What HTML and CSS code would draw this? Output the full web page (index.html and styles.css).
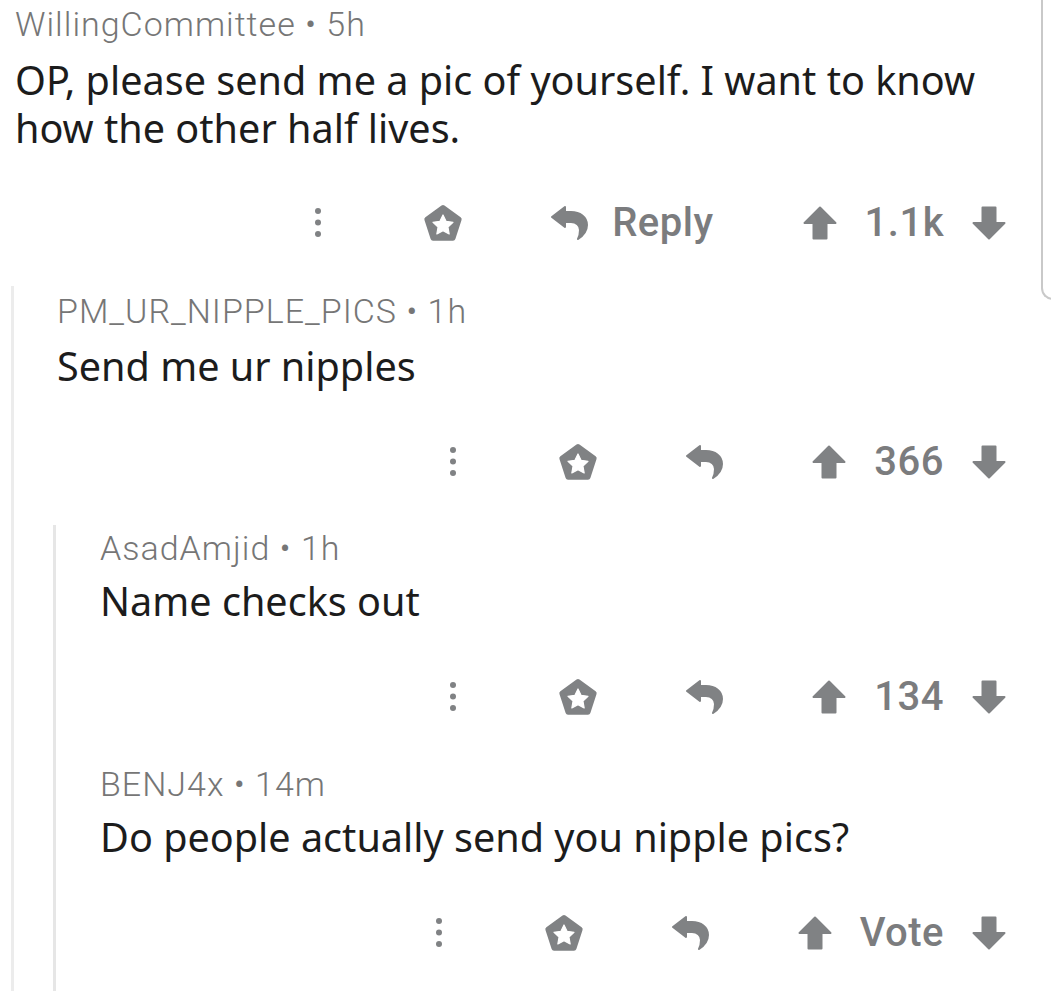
FILE: index.html
```html
<!DOCTYPE html>
<html>
<head>
<meta charset="utf-8">
<link rel="stylesheet" href="styles.css">
</head>
<body>
<div class="edge"></div>
<div class="thread">
  <div class="comment top">
    <div class="meta">WillingCommittee • 5h</div>
    <div class="body">OP, please send me a pic of yourself. I want to know how the other half lives.</div>
    <div class="actions">
      <svg class="dots" viewBox="0 0 6 30"><circle cx="3" cy="3" r="3"/><circle cx="3" cy="14.5" r="3"/><circle cx="3" cy="26" r="3"/></svg>
      <svg class="award" viewBox="0 0 38 37"><path class="pent" d="M19 2.5 L35.17 14.25 L28.99 33.25 L9.01 33.25 L2.83 14.25 Z"/><path class="star" d="M19 10 L22.06 16.29 L28.99 17.26 L23.95 22.11 L25.17 28.99 L19 25.7 L12.83 28.99 L14.05 22.11 L9.01 17.26 L15.94 16.29 Z"/></svg>
      <div class="reply"><svg class="reply-ic" viewBox="0 0 37 34"><path d="M14 1 L1 11 L14 21 L14 16 L20 16 C25 16 29 19 29 24 C29 28 28 31 27 33 C33 29 36 24 36 19 C36 11 29 6 20 6 L14 6 Z"/></svg><span class="label">Reply</span></div>
      <div class="vote"><svg class="arrow" viewBox="0 0 34 34"><path d="M17 1.5 L32.5 17 L23.5 17 L23.5 32.5 L10.5 32.5 L10.5 17 L1.5 17 Z"/></svg><span class="label">1.1k</span><svg class="arrow" viewBox="0 0 34 34"><path d="M17 32.5 L32.5 17 L23.5 17 L23.5 1.5 L10.5 1.5 L10.5 17 L1.5 17 Z"/></svg></div>
    </div>
  </div>
  <div class="replies d1">
    <div class="comment">
      <div class="meta">PM_UR_NIPPLE_PICS • 1h</div>
      <div class="body">Send me ur nipples</div>
      <div class="actions">
        <svg class="dots" viewBox="0 0 6 30"><circle cx="3" cy="3" r="3"/><circle cx="3" cy="14.5" r="3"/><circle cx="3" cy="26" r="3"/></svg>
        <svg class="award" viewBox="0 0 38 37"><path class="pent" d="M19 2.5 L35.17 14.25 L28.99 33.25 L9.01 33.25 L2.83 14.25 Z"/><path class="star" d="M19 10 L22.06 16.29 L28.99 17.26 L23.95 22.11 L25.17 28.99 L19 25.7 L12.83 28.99 L14.05 22.11 L9.01 17.26 L15.94 16.29 Z"/></svg>
        <div class="reply"><svg class="reply-ic" viewBox="0 0 37 34"><path d="M14 1 L1 11 L14 21 L14 16 L20 16 C25 16 29 19 29 24 C29 28 28 31 27 33 C33 29 36 24 36 19 C36 11 29 6 20 6 L14 6 Z"/></svg></div>
        <div class="vote"><svg class="arrow" viewBox="0 0 34 34"><path d="M17 1.5 L32.5 17 L23.5 17 L23.5 32.5 L10.5 32.5 L10.5 17 L1.5 17 Z"/></svg><span class="label">366</span><svg class="arrow" viewBox="0 0 34 34"><path d="M17 32.5 L32.5 17 L23.5 17 L23.5 1.5 L10.5 1.5 L10.5 17 L1.5 17 Z"/></svg></div>
      </div>
    </div>
    <div class="replies d2">
      <div class="comment">
        <div class="meta">AsadAmjid • 1h</div>
        <div class="body">Name checks out</div>
        <div class="actions">
          <svg class="dots" viewBox="0 0 6 30"><circle cx="3" cy="3" r="3"/><circle cx="3" cy="14.5" r="3"/><circle cx="3" cy="26" r="3"/></svg>
          <svg class="award" viewBox="0 0 38 37"><path class="pent" d="M19 2.5 L35.17 14.25 L28.99 33.25 L9.01 33.25 L2.83 14.25 Z"/><path class="star" d="M19 10 L22.06 16.29 L28.99 17.26 L23.95 22.11 L25.17 28.99 L19 25.7 L12.83 28.99 L14.05 22.11 L9.01 17.26 L15.94 16.29 Z"/></svg>
          <div class="reply"><svg class="reply-ic" viewBox="0 0 37 34"><path d="M14 1 L1 11 L14 21 L14 16 L20 16 C25 16 29 19 29 24 C29 28 28 31 27 33 C33 29 36 24 36 19 C36 11 29 6 20 6 L14 6 Z"/></svg></div>
          <div class="vote"><svg class="arrow" viewBox="0 0 34 34"><path d="M17 1.5 L32.5 17 L23.5 17 L23.5 32.5 L10.5 32.5 L10.5 17 L1.5 17 Z"/></svg><span class="label">134</span><svg class="arrow" viewBox="0 0 34 34"><path d="M17 32.5 L32.5 17 L23.5 17 L23.5 1.5 L10.5 1.5 L10.5 17 L1.5 17 Z"/></svg></div>
        </div>
      </div>
      <div class="comment">
        <div class="meta">BENJ4x • 14m</div>
        <div class="body">Do people actually send you nipple pics?</div>
        <div class="actions">
          <svg class="dots" viewBox="0 0 6 30"><circle cx="3" cy="3" r="3"/><circle cx="3" cy="14.5" r="3"/><circle cx="3" cy="26" r="3"/></svg>
          <svg class="award" viewBox="0 0 38 37"><path class="pent" d="M19 2.5 L35.17 14.25 L28.99 33.25 L9.01 33.25 L2.83 14.25 Z"/><path class="star" d="M19 10 L22.06 16.29 L28.99 17.26 L23.95 22.11 L25.17 28.99 L19 25.7 L12.83 28.99 L14.05 22.11 L9.01 17.26 L15.94 16.29 Z"/></svg>
          <div class="reply"><svg class="reply-ic" viewBox="0 0 37 34"><path d="M14 1 L1 11 L14 21 L14 16 L20 16 C25 16 29 19 29 24 C29 28 28 31 27 33 C33 29 36 24 36 19 C36 11 29 6 20 6 L14 6 Z"/></svg></div>
          <div class="vote"><svg class="arrow" viewBox="0 0 34 34"><path d="M17 1.5 L32.5 17 L23.5 17 L23.5 32.5 L10.5 32.5 L10.5 17 L1.5 17 Z"/></svg><span class="label">Vote</span><svg class="arrow" viewBox="0 0 34 34"><path d="M17 32.5 L32.5 17 L23.5 17 L23.5 1.5 L10.5 1.5 L10.5 17 L1.5 17 Z"/></svg></div>
        </div>
      </div>
    </div>
  </div>
</div>
</body>
</html>
```
FILE: styles.css
```css
html, body {
  margin: 0;
  padding: 0;
  background: #ffffff;
}
body {
  position: relative;
  overflow: hidden;
  height: 991px;
}
.edge {
  position: absolute;
  left: 1041px;
  top: -20px;
  width: 30px;
  height: 320px;
  border-left: 2px solid #c9c9c9;
  border-bottom: 2px solid #c9c9c9;
  border-bottom-left-radius: 12px;
  box-sizing: border-box;
}
.thread {
  padding: 2px 45px 60px 15px;
}
.meta {
  font-family: Roboto, "Liberation Sans", sans-serif;
  font-weight: 300;
  font-size: 34px;
  line-height: 44px;
  color: #767676;
  letter-spacing: 1px;
  white-space: nowrap;
}
.body {
  font-family: "Noto Sans", "Open Sans", sans-serif;
  font-size: 39.6px;
  line-height: 48px;
  color: #1c1c1c;
  margin-top: 9px;
}
.top .body {
  margin-top: 10px;
}
.d2 .body {
  margin-top: 7px;
}
.actions {
  display: flex;
  align-items: center;
  justify-content: flex-end;
  height: 60px;
  margin-top: 42px;
  gap: 89px;
  fill: #808284;
  color: #7b7c7e;
}
.top .actions {
  margin-top: 41px;
}
.dots {
  width: 6px;
  height: 30px;
  margin-right: 14px;
}
.award {
  width: 38px;
  height: 37px;
  overflow: visible;
}
.award .pent {
  fill: #808284;
  stroke: #808284;
  stroke-width: 5;
  stroke-linejoin: round;
}
.award .star {
  fill: #ffffff;
  stroke: #ffffff;
  stroke-width: 1.2;
  stroke-linejoin: round;
}
.reply {
  display: flex;
  align-items: center;
  gap: 24px;
}
.reply-ic {
  width: 37px;
  height: 34px;
}
.reply-ic path, .arrow path {
  stroke: #808284;
  stroke-width: 2;
  stroke-linejoin: round;
}
.vote {
  display: flex;
  align-items: center;
  gap: 28px;
}
.arrow {
  width: 34px;
  height: 34px;
}
.label {
  font-family: Roboto, "Liberation Sans", sans-serif;
  font-weight: 500;
  font-size: 40px;
  line-height: 44px;
  letter-spacing: 0.5px;
}
.replies {
  margin-top: 33px;
  border-left: 3px solid #ececec;
}
.d1 {
  margin-left: -4px;
  padding-left: 43px;
  padding-bottom: 40px;
}
.d2 {
  margin-left: -4px;
  padding-left: 44px;
  padding-bottom: 40px;
  border-left-color: #e6e6e6;
}
.replies > .comment {
  padding-top: 3px;
}
.d2 > .comment:first-child {
  padding-top: 1px;
}
.comment + .comment {
  margin-top: 32px;
}
```
